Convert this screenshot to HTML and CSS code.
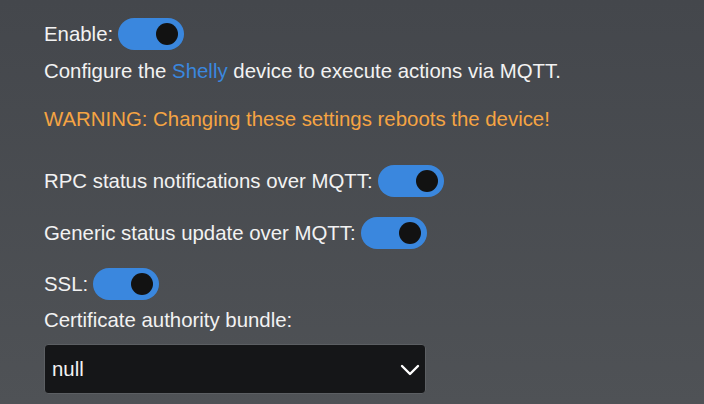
FILE: index.html
```html
<!DOCTYPE html>
<html lang="en">
<head>
    <meta charset="UTF-8">
    <meta name="viewport" content="width=device-width, initial-scale=1.0">
    <title>MQTT Settings</title>
    <link rel="stylesheet" href="styles.css">
</head>
<body>
    <form class="mqtt-settings">
        <label class="switch-row">
            <span>Enable:</span>
            <input type="checkbox" class="switch" checked>
        </label>
        <p class="desc">Configure the <a href="#">Shelly</a> device to execute actions via MQTT.</p>
        <p class="warning">WARNING: Changing these settings reboots the device!</p>

        <label class="switch-row rpc">
            <span>RPC status notifications over MQTT:</span>
            <input type="checkbox" class="switch" checked>
        </label>
        <label class="switch-row generic">
            <span>Generic status update over MQTT:</span>
            <input type="checkbox" class="switch" checked>
        </label>
        <label class="switch-row ssl">
            <span>SSL:</span>
            <input type="checkbox" class="switch" checked>
        </label>

        <label class="field-label" for="ca-bundle">Certificate authority bundle:</label>
        <div class="select-wrap">
            <select id="ca-bundle">
                <option>null</option>
            </select>
            <!-- dropdown chevron -->
            <svg class="chevron" width="20" height="12" viewBox="0 0 20 12" aria-hidden="true">
                <polyline points="2,2 10,10 18,2" fill="none" stroke="#ffffff" stroke-width="2.4" stroke-linecap="round" stroke-linejoin="round"/>
            </svg>
        </div>
    </form>
</body>
</html>
```

FILE: styles.css
```css
:root {
    --bg-top: #44474c;
    --bg-bottom: #4f5256;
    --text-color: #f2f2f2;
    --accent: #3a87de;
    --warning: #f5a443;
    --input-bg: #151618;
    --input-border: #5c5f63;
}

html {
    min-height: 100%;
    background: linear-gradient(180deg, var(--bg-top), var(--bg-bottom));
}

body {
    margin: 0;
    font-family: 'Liberation Sans', Arial, sans-serif;
    font-size: 20.4px;
    color: var(--text-color);
}

.mqtt-settings {
    display: flex;
    flex-direction: column;
    align-items: flex-start;
    padding: 18px 44px 0;
}

.switch-row {
    display: flex;
    align-items: center;
    gap: 5px;
    height: 32px;
}

.switch-row.rpc {
    margin-top: 33px;
}

.switch-row.generic {
    margin-top: 20px;
}

.switch-row.ssl {
    margin-top: 19px;
}

/* toggle switch drawn from the checkbox itself */
.switch {
    appearance: none;
    margin: 0;
    width: 66px;
    height: 32px;
    border-radius: 16px;
    background-color: #6b6e72;
    position: relative;
    cursor: pointer;
}

.switch:checked {
    background-color: var(--accent);
}

.switch::after {
    content: '';
    position: absolute;
    top: 5px;
    left: 6px;
    width: 22px;
    height: 22px;
    border-radius: 50%;
    background-color: #121212;
}

.switch:checked::after {
    left: auto;
    right: 6px;
}

p {
    margin: 0;
    line-height: 26px;
}

.desc {
    margin-top: 8px;
}

.desc a {
    color: var(--accent);
    text-decoration: none;
}

.warning {
    margin-top: 22px;
    color: var(--warning);
}

.field-label {
    margin-top: 7px;
    line-height: 26px;
}

.select-wrap {
    position: relative;
    margin-top: 11px;
}

.select-wrap select {
    appearance: none;
    display: block;
    width: 382px;
    height: 50px;
    padding: 0 40px 0 7px;
    font-family: inherit;
    font-size: 20.4px;
    color: var(--text-color);
    background-color: var(--input-bg);
    border: 1px solid var(--input-border);
    border-radius: 4px;
}

.chevron {
    position: absolute;
    right: 6px;
    top: 20px;
    pointer-events: none;
}
```
